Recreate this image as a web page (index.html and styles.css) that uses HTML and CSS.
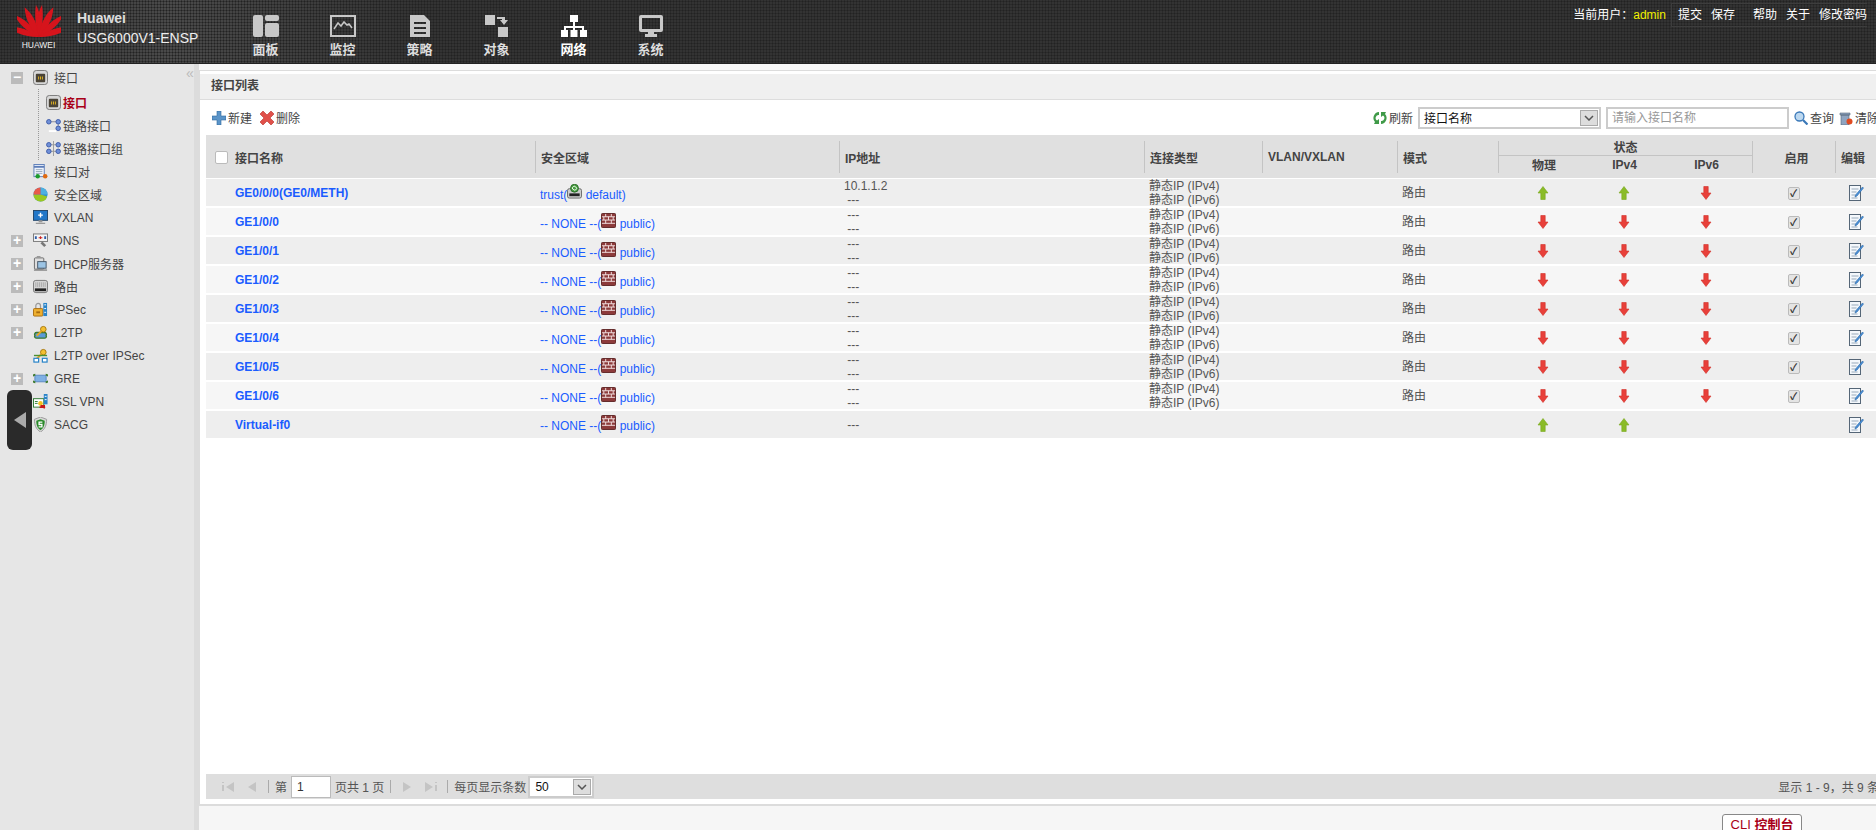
FILE: index.html
```html
<!DOCTYPE html>
<html lang="zh">

<head>
    <meta charset="UTF-8">
    <title>USG6000V1-ENSP</title>
    <link rel="stylesheet" href="styles.css">
</head>

<body>
    <svg class="defs" width="0" height="0">
        <defs>
            <symbol id="i-port" viewBox="0 0 16 16">
                <rect x="0.5" y="0.5" width="15" height="15" rx="3" fill="#d8d8d8" stroke="#777"/>
                <rect x="3" y="4" width="10" height="9" rx="1" fill="#4a4438"/>
                <path d="M5.5 7h1v3h-1zM7.5 7h1v3h-1zM9.5 7h1v3h-1z" fill="#e8b820"/>
            </symbol>
            <symbol id="i-link" viewBox="0 0 16 16">
                <path d="M3 4h10v8" fill="none" stroke="#889" stroke-width="1"/>
                <path d="M3 14h8" stroke="#fff" stroke-width="2"/>
                <circle cx="3" cy="4" r="2.4" fill="#6f8fd8" stroke="#3c5aa8"/>
                <circle cx="13" cy="4" r="2.4" fill="#6f8fd8" stroke="#3c5aa8"/>
                <circle cx="13" cy="11" r="2.4" fill="#6f8fd8" stroke="#3c5aa8"/>
            </symbol>
            <symbol id="i-group" viewBox="0 0 16 16">
                <path d="M8 0v16M3 4h10M3 11h10" stroke="#999" stroke-width="1"/>
                <circle cx="3" cy="4" r="2.4" fill="#6f8fd8" stroke="#3c5aa8"/>
                <circle cx="13" cy="4" r="2.4" fill="#6f8fd8" stroke="#3c5aa8"/>
                <circle cx="3" cy="11" r="2.4" fill="#6f8fd8" stroke="#3c5aa8"/>
                <circle cx="13" cy="11" r="2.4" fill="#6f8fd8" stroke="#3c5aa8"/>
            </symbol>
            <symbol id="i-pair" viewBox="0 0 16 16">
                <rect x="1" y="0.5" width="11" height="13" fill="#eef3fb" stroke="#5c7db8"/>
                <path d="M1 3h11" stroke="#5c7db8" stroke-width="2"/>
                <path d="M3 6h7M3 8h7M3 10h7" stroke="#9ab"/>
                <circle cx="5" cy="13" r="2.4" fill="#1c9a2c"/>
                <circle cx="13" cy="13" r="2.4" fill="#e06a10"/>
            </symbol>
            <symbol id="i-zone" viewBox="0 0 16 16">
                <circle cx="8" cy="8" r="7.5" fill="#2f8fd0"/>
                <path d="M8 8V.5A7.5 7.5 0 0 1 15.5 8z" fill="#4cb0e0"/>
                <path d="M8 8H.5A7.5 7.5 0 0 0 8 15.5 7.5 7.5 0 0 0 15 10z" fill="#9ac820"/>
                <path d="M8 8V.5A7.5 7.5 0 0 0 .5 8z" fill="#e85a4a"/>
            </symbol>
            <symbol id="i-vxlan" viewBox="0 0 16 16">
                <rect x="0.5" y="0.5" width="15" height="10.5" fill="#2277c8" stroke="#246"/>
                <path d="M8 3v5M5.5 5.500h5" stroke="#fff" stroke-width="1.500"/>
                <path d="M6 11h4v2H6zM3 13.500h10v1.500H3z" fill="#999"/>
            </symbol>
            <symbol id="i-dns" viewBox="0 0 16 16">
                <rect x="0.5" y="1" width="15" height="8" fill="#f4f4f4" stroke="#777"/>
                <path d="M6 5h4M8 3.500v3" stroke="#c22" stroke-width="1.200"/>
                <path d="M2 3.500h2v3H2zM12 3.500h2v3h-2z" fill="#2a5aa8"/>
                <path d="M9 10l4 4" stroke="#777" stroke-width="3"/>
            </symbol>
            <symbol id="i-dhcp" viewBox="0 0 16 16">
                <rect x="1.500" y="2" width="10" height="12" rx="1" fill="#ddd" stroke="#666"/>
                <rect x="5" y="6" width="9" height="7" fill="#9cc4e4" stroke="#456"/>
                <path d="M1 15h14" stroke="#888" stroke-width="1.500"/>
                <path d="M4 0h4v2H4z" fill="#999"/>
            </symbol>
            <symbol id="i-route" viewBox="0 0 16 16">
                <rect x="0.500" y="1.500" width="15" height="13" rx="2.500" fill="#d4d4d4" stroke="#777"/>
                <path d="M3 3.500v5M5 3.500v5M7 3.500v5M9 3.500v5M11 3.500v5M13 3.500v5" stroke="#aaa"/>
                <rect x="2" y="10" width="12" height="3" fill="#222"/>
            </symbol>
            <symbol id="i-ipsec" viewBox="0 0 16 16">
                <path d="M3 7V4a2.500 2.500 0 0 1 5 0v3" fill="none" stroke="#999" stroke-width="1.300"/>
                <rect x="0.500" y="7" width="10" height="8" rx="1" fill="#eeb030" stroke="#a86c10"/>
                <rect x="3.500" y="10" width="4" height="2" fill="#a86c10"/>
                <path d="M13 1v14" stroke="#2a84c8" stroke-width="4"/>
                <path d="M12 3h2M12 7h2M12 11h2" stroke="#fff"/>
            </symbol>
            <symbol id="i-l2tp" viewBox="0 0 16 16">
                <path d="M2 11a2 2 0 0 1 2-3h8a2 2 0 0 1 2 3 2 2 0 0 1-2 3H4a2 2 0 0 1-2-3z" fill="#5c9ad8" stroke="#3d7a30" stroke-width="1.500"/>
                <circle cx="11" cy="4.500" r="3" fill="#f4c030" stroke="#a87810"/>
                <path d="M9 6.500l-5 5" stroke="#e8a820" stroke-width="2"/>
            </symbol>
            <symbol id="i-l2tpsec" viewBox="0 0 16 16">
                <circle cx="11" cy="4.500" r="3" fill="#f4c030" stroke="#a87810"/>
                <path d="M9 6.500l-5 5" stroke="#e8a820" stroke-width="2"/>
                <path d="M1 8h14" stroke="#4a9030" stroke-width="1.500"/>
                <rect x="1" y="11" width="5" height="4" fill="#fff" stroke="#2a84c8" stroke-width="1.300"/>
                <rect x="10" y="11" width="5" height="4" fill="#fff" stroke="#2a84c8" stroke-width="1.300"/>
            </symbol>
            <symbol id="i-gre" viewBox="0 0 16 16">
                <rect x="2" y="4.500" width="12" height="7" rx="1" fill="#7fb0e4" stroke="#5a88c0"/>
                <path d="M2.500 4a4 4 0 0 0 0 8M13.500 4a4 4 0 0 1 0 8" fill="none" stroke="#3d7a30" stroke-width="2"/>
            </symbol>
            <symbol id="i-ssl" viewBox="0 0 16 16">
                <rect x="0.500" y="5" width="11" height="9" fill="#fff" stroke="#2c7a30"/>
                <path d="M2 8h3M2 10h3" stroke="#2c7a30"/>
                <circle cx="8" cy="10" r="2.500" fill="#f0c020"/>
                <path d="M8 12.500h4v3M7 14h6" stroke="#c81818" stroke-width="1.600" fill="none"/>
                <path d="M13.500 0v11" stroke="#2a84c8" stroke-width="4"/>
                <path d="M12.500 2.500h2M12.500 6h2" stroke="#fff"/>
            </symbol>
            <symbol id="i-sacg" viewBox="0 0 16 16">
                <path d="M8 0l6.500 2.500c0 6-1.500 10.500-6.500 13.500C3 13 1.500 8.500 1.500 2.500z" fill="#d8d8d8" stroke="#999"/>
                <path d="M8 2.500l4.500 1.500c0 4.500-1 8-4.500 10C4.500 12 3.500 8.500 3.500 4z" fill="#2a8a2a"/>
                <path d="M10 5.500H6.500v2.500h3v2.500H6" fill="none" stroke="#fff" stroke-width="1.400"/>
            </symbol>
            <symbol id="i-wall" viewBox="0 0 16 16">
                <rect x="0.500" y="0.500" width="15" height="15" rx="1" fill="#8c3a3a" stroke="#5c2222"/>
                <path d="M1 4h14M1 7.500h14M1 11h14M5 1v3M11 1v3M3 4v3.500M8 4v3.500M13 4v3.500M5 7.500v3.500M11 7.500v3.500" stroke="#f4e4e4"/>
            </symbol>
            <symbol id="i-vsys" viewBox="0 0 16 16">
                <rect x="0.500" y="5" width="15" height="10" rx="2" fill="#ccc" stroke="#666"/>
                <rect x="2.500" y="10" width="11" height="3" fill="#222"/>
                <circle cx="8" cy="4.500" r="4.200" fill="#48a040" stroke="#2a6a28"/>
                <path d="M6 5.500a2 2 0 0 1 3.500-2M10 3.500a2 2 0 0 1-3.500 2" fill="none" stroke="#fff"/>
            </symbol>
            <symbol id="i-up" viewBox="0 0 12 14">
                <path d="M6 0.500l5 6.500H8.200v6.500H3.800V7H1z" fill="#8abb28" stroke="#78a820" stroke-width=".6"/>
            </symbol>
            <symbol id="i-down" viewBox="0 0 12 14">
                <path d="M3.800 0.500h4.400V7H11l-5 6.500L1 7h2.800z" fill="#e8403a" stroke="#d03028" stroke-width=".6"/>
            </symbol>
            <symbol id="i-edit" viewBox="0 0 16 18">
                <rect x="1.500" y="1.500" width="11" height="15" fill="#f4f8fc" stroke="#567"/>
                <path d="M3.500 5h7M3.500 8h5M3.500 11h4M3.500 14h6" stroke="#9ab"/>
                <path d="M14.500 3l1 1-6.500 8-2 1 .5-2z" fill="#4a90d8" stroke="#2a68a8" stroke-width=".6"/>
            </symbol>
        </defs>
    </svg>

    <header class="topbar">
        <div class="brand">
            <div class="logo">
                <svg class="logo-mark" viewBox="0 0 44 34" width="44" height="34">
                    <g fill="#d6141c">
                        <path d="M22 33C19 25 17 12 22 0c5 12 3 25 0 33z" transform="rotate(-72 22 33)"/>
                        <path d="M22 33C19 25 17 12 22 0c5 12 3 25 0 33z" transform="rotate(-48 22 33)"/>
                        <path d="M22 33C18 25 16 12 21 0c6 12 4 25 1 33z" transform="rotate(-24 22 33)"/>
                        <path d="M22 33C19 25 17 12 19 1c5 8 6 22 3 32z"/>
                        <path d="M22 33C25 25 27 12 25 1c-5 8-6 22-3 32z"/>
                        <path d="M22 33C26 25 28 12 23 0c-6 12-4 25-1 33z" transform="rotate(24 22 33)"/>
                        <path d="M22 33C25 25 27 12 22 0c-5 12-3 25 0 33z" transform="rotate(48 22 33)"/>
                        <path d="M22 33C25 25 27 12 22 0c-5 12-3 25 0 33z" transform="rotate(72 22 33)"/>
                    </g>
                </svg>
                <span class="logo-text">HUAWEI</span>
            </div>
            <div class="product">
                <div class="product-name">Huawei</div>
                <div class="product-model">USG6000V1-ENSP</div>
            </div>
        </div>
        <nav class="mainnav">
            <a class="nav-item">
                <svg class="nav-icon" viewBox="0 0 26 22">
                    <rect x="0" y="0" width="10" height="22" rx="2"/>
                    <rect x="12" y="0" width="14" height="6" rx="2"/>
                    <rect x="12" y="8" width="14" height="14" rx="2"/>
                </svg>
                面板
            </a>
            <a class="nav-item">
                <svg class="nav-icon" viewBox="0 0 26 22">
                    <rect x="1" y="1" width="24" height="20" fill="none" stroke="#c8c8c8" stroke-width="2"/>
                    <path d="M4 14l4-6 3 3 3-4 3 3 2-1 3 4" fill="none" stroke="#c8c8c8" stroke-width="1.500"/>
                </svg>
                监控
            </a>
            <a class="nav-item">
                <svg class="nav-icon" viewBox="0 0 26 22">
                    <path d="M3 0h14l6 6v16H3zM7 7v2h12V7zM7 12v2h12v-2zM7 17v2h12v-2z" fill-rule="evenodd"/>
                </svg>
                策略
            </a>
            <a class="nav-item">
                <svg class="nav-icon" viewBox="0 0 26 22">
                    <rect x="1" y="0" width="10" height="10"/>
                    <rect x="14" y="12" width="10" height="10"/>
                    <path d="M13 2h8v3h3l-4 5-4-5h2V4h-5z"/>
                </svg>
                对象
            </a>
            <a class="nav-item is-active">
                <svg class="nav-icon" viewBox="0 0 26 22">
                    <rect x="9" y="0" width="8" height="7"/>
                    <rect x="0" y="15" width="7" height="7"/>
                    <rect x="9.500" y="15" width="7" height="7"/>
                    <rect x="19" y="15" width="7" height="7"/>
                    <path d="M12 7h2v4h9v4h-2v-2h-7v2h-2v-2H5v2H3v-4h9z"/>
                </svg>
                网络
            </a>
            <a class="nav-item">
                <svg class="nav-icon" viewBox="0 0 26 22">
                    <path d="M3 0h20a2 2 0 0 1 2 2v13a2 2 0 0 1-2 2H3a2 2 0 0 1-2-2V2a2 2 0 0 1 2-2zM4 3v11h18V3z" fill-rule="evenodd"/>
                    <path d="M10 17h6v2h3v3H7v-3h3z"/>
                </svg>
                系统
            </a>
        </nav>
        <div class="userbar">
            <span class="user-label">当前用户：<b class="user-name">admin</b></span>
            <div class="user-links">
                <a>提交</a>
                <a>保存</a>
                <a class="gap-left">帮助</a>
                <a>关于</a>
                <a>修改密码</a>
            </div>
        </div>
    </header>

    <div class="page">
        <aside class="sidebar">
            <span class="collapse-mark">«</span>
            <ul class="tree">
                <li class="tree-row"><span class="toggle">−</span><svg class="t-icon"><use href="#i-port"/></svg><span>接口</span></li>
                <li>
                    <ul class="subtree">
                        <li class="sub-row is-current"><svg class="t-icon"><use href="#i-port"/></svg><span>接口</span></li>
                        <li class="sub-row"><svg class="t-icon"><use href="#i-link"/></svg><span>链路接口</span></li>
                        <li class="sub-row"><svg class="t-icon"><use href="#i-group"/></svg><span>链路接口组</span></li>
                    </ul>
                </li>
                <li class="tree-row"><span class="toggle none"></span><svg class="t-icon"><use href="#i-pair"/></svg><span>接口对</span></li>
                <li class="tree-row"><span class="toggle none"></span><svg class="t-icon"><use href="#i-zone"/></svg><span>安全区域</span></li>
                <li class="tree-row"><span class="toggle none"></span><svg class="t-icon"><use href="#i-vxlan"/></svg><span>VXLAN</span></li>
                <li class="tree-row"><span class="toggle">+</span><svg class="t-icon"><use href="#i-dns"/></svg><span>DNS</span></li>
                <li class="tree-row"><span class="toggle">+</span><svg class="t-icon"><use href="#i-dhcp"/></svg><span>DHCP服务器</span></li>
                <li class="tree-row"><span class="toggle">+</span><svg class="t-icon"><use href="#i-route"/></svg><span>路由</span></li>
                <li class="tree-row"><span class="toggle">+</span><svg class="t-icon"><use href="#i-ipsec"/></svg><span>IPSec</span></li>
                <li class="tree-row"><span class="toggle">+</span><svg class="t-icon"><use href="#i-l2tp"/></svg><span>L2TP</span></li>
                <li class="tree-row"><span class="toggle none"></span><svg class="t-icon"><use href="#i-l2tpsec"/></svg><span>L2TP over IPSec</span></li>
                <li class="tree-row"><span class="toggle">+</span><svg class="t-icon"><use href="#i-gre"/></svg><span>GRE</span></li>
                <li class="tree-row"><span class="toggle none"></span><svg class="t-icon"><use href="#i-ssl"/></svg><span>SSL VPN</span></li>
                <li class="tree-row"><span class="toggle none"></span><svg class="t-icon"><use href="#i-sacg"/></svg><span>SACG</span></li>
            </ul>
            <div class="side-handle"><span class="handle-arrow"></span></div>
        </aside>

        <div class="workspace">
            <main class="panel">
                <div class="panel-title">接口列表</div>

                <div class="toolbar">
                    <a class="tool">
                        <svg class="tool-icon" viewBox="0 0 14 14"><path d="M5 0h4v5h5v4H9v5H5V9H0V5h5z" fill="#5b94c8" stroke="#2f6aa0" stroke-width=".6"/></svg>
                        新建
                    </a>
                    <a class="tool">
                        <svg class="tool-icon" viewBox="0 0 14 14"><path d="M3 0l4 4 4-4 3 3-4 4 4 4-3 3-4-4-4 4-3-3 4-4-4-4z" fill="#e0504a" stroke="#b83028" stroke-width=".6"/></svg>
                        删除
                    </a>
                    <div class="tool-right">
                        <a class="tool">
                            <svg class="tool-icon" viewBox="0 0 14 14"><path d="M6 1a6 6 0 0 0-4 10l-1 2h5V8L4 9.500A3 3 0 0 1 6 4zM8 13a6 6 0 0 0 4-10l1-2H8v5l2-1.500A3 3 0 0 1 8 10z" fill="#3f9a48"/></svg>
                            刷新
                        </a>
                        <div class="combo combo-search">
                            <span>接口名称</span>
                            <span class="combo-arrow"><svg viewBox="0 0 10 6" width="10" height="6"><path d="M1 1l4 4 4-4" fill="none" stroke="#555" stroke-width="1.500"/></svg></span>
                        </div>
                        <input class="search-input" type="text" placeholder="请输入接口名称">
                        <a class="tool">
                            <svg class="tool-icon" viewBox="0 0 14 14"><circle cx="5.500" cy="5.500" r="4.500" fill="#bcd8f0" stroke="#3a78b8" stroke-width="1.300"/><path d="M9 9l4.500 4.500" stroke="#3a78b8" stroke-width="2.200"/></svg>
                            查询
                        </a>
                        <a class="tool">
                            <svg class="tool-icon" viewBox="0 0 14 14"><path d="M1 2h10v2H1zM2 4h8v10H2z" fill="#8fa4c0" stroke="#567"  stroke-width=".6"/><circle cx="10.500" cy="10.500" r="3" fill="#e04a20"/></svg>
                            清除
                        </a>
                    </div>
                </div>

                <div class="grid">
                    <div class="grid-head">
                        <div class="hcell hcell-first"><span class="head-check"></span>接口名称</div>
                        <div class="hcell">安全区域</div>
                        <div class="hcell">IP地址</div>
                        <div class="hcell">连接类型</div>
                        <div class="hcell">VLAN/VXLAN</div>
                        <div class="hcell">模式</div>
                        <div class="hcell-state">
                            <div class="state-title">状态</div>
                            <div class="state-sub"><span>物理</span><span>IPv4</span><span>IPv6</span></div>
                        </div>
                        <div class="hcell hcell-center">启用</div>
                        <div class="hcell">编辑</div>
                    </div>

                    <div class="row">
                        <a class="c-name">GE0/0/0(GE0/METH)</a>
                        <a class="c-zone">trust(<svg class="zone-icon"><use href="#i-vsys"/></svg> default)</a>
                        <div class="c-text">10.1.1.2<br>&nbsp;---</div>
                        <div class="c-text">静态IP (IPv4)<br>静态IP (IPv6)</div>
                        <div class="c-text"></div>
                        <div class="c-text">路由</div>
                        <div class="c-mark"><svg class="arrow"><use href="#i-up"/></svg></div>
                        <div class="c-mark"><svg class="arrow"><use href="#i-up"/></svg></div>
                        <div class="c-mark"><svg class="arrow"><use href="#i-down"/></svg></div>
                        <div class="c-mark"><span class="check">✓</span></div>
                        <div class="c-edit"><svg class="edit"><use href="#i-edit"/></svg></div>
                    </div>
                    <div class="row">
                        <a class="c-name">GE1/0/0</a>
                        <a class="c-zone">-- NONE --(<svg class="zone-icon"><use href="#i-wall"/></svg> public)</a>
                        <div class="c-text">&nbsp;---<br>&nbsp;---</div>
                        <div class="c-text">静态IP (IPv4)<br>静态IP (IPv6)</div>
                        <div class="c-text"></div>
                        <div class="c-text">路由</div>
                        <div class="c-mark"><svg class="arrow"><use href="#i-down"/></svg></div>
                        <div class="c-mark"><svg class="arrow"><use href="#i-down"/></svg></div>
                        <div class="c-mark"><svg class="arrow"><use href="#i-down"/></svg></div>
                        <div class="c-mark"><span class="check">✓</span></div>
                        <div class="c-edit"><svg class="edit"><use href="#i-edit"/></svg></div>
                    </div>
                    <div class="row">
                        <a class="c-name">GE1/0/1</a>
                        <a class="c-zone">-- NONE --(<svg class="zone-icon"><use href="#i-wall"/></svg> public)</a>
                        <div class="c-text">&nbsp;---<br>&nbsp;---</div>
                        <div class="c-text">静态IP (IPv4)<br>静态IP (IPv6)</div>
                        <div class="c-text"></div>
                        <div class="c-text">路由</div>
                        <div class="c-mark"><svg class="arrow"><use href="#i-down"/></svg></div>
                        <div class="c-mark"><svg class="arrow"><use href="#i-down"/></svg></div>
                        <div class="c-mark"><svg class="arrow"><use href="#i-down"/></svg></div>
                        <div class="c-mark"><span class="check">✓</span></div>
                        <div class="c-edit"><svg class="edit"><use href="#i-edit"/></svg></div>
                    </div>
                    <div class="row">
                        <a class="c-name">GE1/0/2</a>
                        <a class="c-zone">-- NONE --(<svg class="zone-icon"><use href="#i-wall"/></svg> public)</a>
                        <div class="c-text">&nbsp;---<br>&nbsp;---</div>
                        <div class="c-text">静态IP (IPv4)<br>静态IP (IPv6)</div>
                        <div class="c-text"></div>
                        <div class="c-text">路由</div>
                        <div class="c-mark"><svg class="arrow"><use href="#i-down"/></svg></div>
                        <div class="c-mark"><svg class="arrow"><use href="#i-down"/></svg></div>
                        <div class="c-mark"><svg class="arrow"><use href="#i-down"/></svg></div>
                        <div class="c-mark"><span class="check">✓</span></div>
                        <div class="c-edit"><svg class="edit"><use href="#i-edit"/></svg></div>
                    </div>
                    <div class="row">
                        <a class="c-name">GE1/0/3</a>
                        <a class="c-zone">-- NONE --(<svg class="zone-icon"><use href="#i-wall"/></svg> public)</a>
                        <div class="c-text">&nbsp;---<br>&nbsp;---</div>
                        <div class="c-text">静态IP (IPv4)<br>静态IP (IPv6)</div>
                        <div class="c-text"></div>
                        <div class="c-text">路由</div>
                        <div class="c-mark"><svg class="arrow"><use href="#i-down"/></svg></div>
                        <div class="c-mark"><svg class="arrow"><use href="#i-down"/></svg></div>
                        <div class="c-mark"><svg class="arrow"><use href="#i-down"/></svg></div>
                        <div class="c-mark"><span class="check">✓</span></div>
                        <div class="c-edit"><svg class="edit"><use href="#i-edit"/></svg></div>
                    </div>
                    <div class="row">
                        <a class="c-name">GE1/0/4</a>
                        <a class="c-zone">-- NONE --(<svg class="zone-icon"><use href="#i-wall"/></svg> public)</a>
                        <div class="c-text">&nbsp;---<br>&nbsp;---</div>
                        <div class="c-text">静态IP (IPv4)<br>静态IP (IPv6)</div>
                        <div class="c-text"></div>
                        <div class="c-text">路由</div>
                        <div class="c-mark"><svg class="arrow"><use href="#i-down"/></svg></div>
                        <div class="c-mark"><svg class="arrow"><use href="#i-down"/></svg></div>
                        <div class="c-mark"><svg class="arrow"><use href="#i-down"/></svg></div>
                        <div class="c-mark"><span class="check">✓</span></div>
                        <div class="c-edit"><svg class="edit"><use href="#i-edit"/></svg></div>
                    </div>
                    <div class="row">
                        <a class="c-name">GE1/0/5</a>
                        <a class="c-zone">-- NONE --(<svg class="zone-icon"><use href="#i-wall"/></svg> public)</a>
                        <div class="c-text">&nbsp;---<br>&nbsp;---</div>
                        <div class="c-text">静态IP (IPv4)<br>静态IP (IPv6)</div>
                        <div class="c-text"></div>
                        <div class="c-text">路由</div>
                        <div class="c-mark"><svg class="arrow"><use href="#i-down"/></svg></div>
                        <div class="c-mark"><svg class="arrow"><use href="#i-down"/></svg></div>
                        <div class="c-mark"><svg class="arrow"><use href="#i-down"/></svg></div>
                        <div class="c-mark"><span class="check">✓</span></div>
                        <div class="c-edit"><svg class="edit"><use href="#i-edit"/></svg></div>
                    </div>
                    <div class="row">
                        <a class="c-name">GE1/0/6</a>
                        <a class="c-zone">-- NONE --(<svg class="zone-icon"><use href="#i-wall"/></svg> public)</a>
                        <div class="c-text">&nbsp;---<br>&nbsp;---</div>
                        <div class="c-text">静态IP (IPv4)<br>静态IP (IPv6)</div>
                        <div class="c-text"></div>
                        <div class="c-text">路由</div>
                        <div class="c-mark"><svg class="arrow"><use href="#i-down"/></svg></div>
                        <div class="c-mark"><svg class="arrow"><use href="#i-down"/></svg></div>
                        <div class="c-mark"><svg class="arrow"><use href="#i-down"/></svg></div>
                        <div class="c-mark"><span class="check">✓</span></div>
                        <div class="c-edit"><svg class="edit"><use href="#i-edit"/></svg></div>
                    </div>
                    <div class="row row-short">
                        <a class="c-name">Virtual-if0</a>
                        <a class="c-zone">-- NONE --(<svg class="zone-icon"><use href="#i-wall"/></svg> public)</a>
                        <div class="c-text">&nbsp;---</div>
                        <div class="c-text"></div>
                        <div class="c-text"></div>
                        <div class="c-text"></div>
                        <div class="c-mark"><svg class="arrow"><use href="#i-up"/></svg></div>
                        <div class="c-mark"><svg class="arrow"><use href="#i-up"/></svg></div>
                        <div class="c-mark"></div>
                        <div class="c-mark"></div>
                        <div class="c-edit"><svg class="edit"><use href="#i-edit"/></svg></div>
                    </div>
                </div>

                <div class="pager">
                    <svg class="page-btn" viewBox="0 0 14 14"><path d="M1 2h2v1H1zM1 5h2v6H1zM13 2v10L5 7z"/></svg>
                    <svg class="page-btn" viewBox="0 0 14 14"><path d="M11 2v10L3 7z"/></svg>
                    <span class="page-sep"></span>
                    <span>第</span>
                    <input class="page-input" type="text" value="1">
                    <span>页共 1 页</span>
                    <span class="page-sep"></span>
                    <svg class="page-btn" viewBox="0 0 14 14"><path d="M3 2v10l8-5z"/></svg>
                    <svg class="page-btn" viewBox="0 0 14 14"><path d="M1 2v10l8-5zM11 2h2v1h-2zM11 5h2v6h-2z"/></svg>
                    <span class="page-sep"></span>
                    <span>每页显示条数</span>
                    <div class="combo combo-page">
                        <span>50</span>
                        <span class="combo-arrow"><svg viewBox="0 0 10 6" width="10" height="6"><path d="M1 1l4 4 4-4" fill="none" stroke="#555" stroke-width="1.500"/></svg></span>
                    </div>
                    <span class="page-info">显示 1 - 9，共 9 条</span>
                </div>
            </main>

            <footer class="footer">
                <a class="cli-btn">CLI <b>控制台</b></a>
            </footer>
        </div>
    </div>
</body>

</html>
```

FILE: styles.css
```css
* {
    box-sizing: border-box;
}

html,
body {
    height: 100%;
}

body {
    margin: 0;
    overflow: hidden;
    display: flex;
    flex-direction: column;
    font-family: "Liberation Sans", "Noto Sans CJK SC", sans-serif;
    font-size: 12px;
    color: #444;
    background-color: #fff;
}

ul {
    list-style: none;
    margin: 0;
    padding: 0;
}

a {
    color: inherit;
    text-decoration: none;
}

.defs {
    position: absolute;
}

/* top bar */
.topbar {
    flex: none;
    height: 64px;
    display: flex;
    color: #fff;
    background-color: #333;
    background-image:
        radial-gradient(circle at 1.5px 1.5px, #222 0.8px, transparent 1.2px),
        linear-gradient(90deg, #333 0, #4a4a4a 170px, #333 420px);
    background-size: 3px 3px, 100% 100%;
    border-bottom: 1px solid #222;
}

.brand {
    width: 227px;
    flex: none;
    display: flex;
}

.logo {
    width: 77px;
    display: flex;
    flex-direction: column;
    align-items: center;
    padding: 4px 0 0 0;
}

.logo-mark {
    display: block;
}

.logo-text {
    font-size: 8.500px;
    margin-top: 2px;
    color: #eee;
}

.product {
    padding-top: 9px;
}

.product-name {
    font-size: 14px;
    font-weight: bold;
    color: #ddd;
    line-height: 18px;
}

.product-model {
    font-size: 14px;
    line-height: 20px;
    margin-top: 1px;
    color: #eee;
}

.mainnav {
    display: flex;
    padding-top: 15px;
}

.nav-item {
    width: 77px;
    display: flex;
    flex-direction: column;
    align-items: center;
    font-size: 13px;
    font-weight: bold;
    line-height: 18px;
    color: #ddd;
}

.nav-icon {
    width: 26px;
    height: 22px;
    margin-bottom: 4px;
    fill: #c8c8c8;
}

.nav-item.is-active {
    color: #fff;
}

.nav-item.is-active .nav-icon {
    fill: #fff;
}

.userbar {
    margin-left: auto;
    display: flex;
    align-items: flex-start;
    padding: 3px 9px 0 0;
}

.user-label {
    line-height: 24px;
    margin-right: 5px;
}

.user-name {
    font-weight: normal;
    color: #f0f000;
}

.user-links {
    display: flex;
    gap: 9px;
    height: 24px;
    line-height: 22px;
    padding: 0 0 0 6px;
    border: 1px solid #3d3d3d;
    border-right: none;
}

.gap-left {
    margin-left: 9px;
}

/* page body */
.page {
    flex: 1;
    min-height: 0;
    display: flex;
}

.sidebar {
    position: relative;
    flex: none;
    width: 199px;
    padding-top: 2px;
    background-color: #e6e6e6;
    border-right: 5px solid #dcdcdc;
}

.collapse-mark {
    position: absolute;
    left: 186px;
    top: 1px;
    font-size: 14px;
    color: #bbb;
}

.tree-row {
    height: 23px;
    display: flex;
    align-items: center;
    padding-left: 11px;
    color: #444;
}

.toggle {
    flex: none;
    width: 12px;
    height: 12px;
    margin-right: 10px;
    background-color: #bbb;
    color: #fff;
    font-size: 14px;
    font-weight: bold;
    line-height: 11px;
    text-align: center;
}

.toggle.none {
    background: none;
}

.t-icon {
    flex: none;
    width: 15px;
    height: 15px;
    margin-right: 6px;
}

.subtree {
    position: relative;
    margin-left: 38px;
    padding-top: 2px;
    border-left: 1px dotted #999;
}

.sub-row {
    height: 23px;
    display: flex;
    align-items: center;
    padding-left: 7px;
    border-left: none;
    background-image: linear-gradient(90deg, #999 50%, transparent 50%);
    background-size: 2px 1px;
    background-repeat: repeat-x;
    background-position: 0 50%;
    background-origin: content-box;
}

.sub-row {
    background: none;
}

.sub-row .t-icon {
    margin-right: 2px;
}

.sub-row.is-current {
    color: #a80018;
    font-weight: bold;
}

.side-handle {
    position: absolute;
    left: 7px;
    top: 326px;
    width: 25px;
    height: 60px;
    display: flex;
    align-items: center;
    justify-content: center;
    background-color: #2a2a2a;
    border-radius: 6px;
}

.handle-arrow {
    width: 0;
    height: 0;
    border-top: 8px solid transparent;
    border-bottom: 8px solid transparent;
    border-right: 12px solid #aaa;
}

/* right side */
.workspace {
    flex: none;
    width: 1690px;
    display: flex;
    flex-direction: column;
    background-color: #f7f7f7;
}

.panel {
    flex: 1;
    min-height: 0;
    margin: 6px 0 0 0;
    padding: 3px 0 5px 6px;
    display: flex;
    flex-direction: column;
    background-color: #fff;
    border-top: 1px solid #dcdcdc;
    border-left: 1px solid #dcdcdc;
    border-bottom: 2px solid #dcdcdc;
}

.panel-title {
    flex: none;
    height: 26px;
    margin-left: -6px;
    padding-left: 11px;
    line-height: 25px;
    font-weight: bold;
    color: #444;
    background-color: #f0f0f0;
    border-bottom: 1px solid #ddd;
}

.toolbar {
    flex: none;
    height: 35px;
    display: flex;
    align-items: center;
    gap: 8px;
    padding-left: 6px;
}

.tool {
    display: flex;
    align-items: center;
    gap: 2px;
    white-space: nowrap;
}

.tool-icon {
    width: 14px;
    height: 14px;
}

.tool-right {
    margin-left: auto;
    display: flex;
    align-items: center;
    gap: 5px;
    padding-right: 10px;
}

.combo {
    display: flex;
    align-items: center;
    justify-content: space-between;
    background-color: #fff;
    border: 2px solid #ccc;
    color: #111;
}

.combo-search {
    width: 183px;
    height: 22px;
    padding: 0 1px 0 4px;
}

.combo-arrow {
    width: 18px;
    height: 16px;
    display: flex;
    align-items: center;
    justify-content: center;
    background-color: #ddd;
    border: 1px solid #aaa;
}

.search-input {
    width: 183px;
    height: 22px;
    padding: 0 4px;
    font: inherit;
    border: 2px solid #ccc;
}

.search-input::placeholder {
    color: #999;
}

/* interface grid */
.grid {
    flex: 1;
    min-height: 0;
}

.grid-head,
.row {
    display: grid;
    grid-template-columns: 329px 304px 305px 118px 135px 101px 90px 71px 93px 83px 1fr;
}

.grid-head {
    height: 43px;
    padding: 6px 0;
    background-color: #e0e0e0;
    font-weight: bold;
    color: #444;
}

.hcell {
    padding-left: 5px;
    display: flex;
    align-items: center;
    border-left: 1px solid #c4c4c4;
}

.hcell-first {
    border-left: none;
    padding-left: 9px;
}

.hcell-center {
    justify-content: center;
}

.head-check {
    width: 13px;
    height: 13px;
    margin-right: 7px;
    background-color: #fff;
    border: 1px solid #bbb;
    border-radius: 2px;
}

.hcell-state {
    grid-column: span 3;
    display: flex;
    flex-direction: column;
    border-left: 1px solid #c4c4c4;
}

.state-title {
    height: 15px;
    line-height: 14px;
    text-align: center;
    border-bottom: 1px solid #c4c4c4;
}

.state-sub {
    flex: 1;
    display: grid;
    grid-template-columns: 90px 71px 93px;
    align-items: center;
    text-align: center;
    font-weight: bold;
}

.row {
    height: 29px;
    align-items: center;
    color: #555;
    line-height: 14px;
    background-color: #eee;
    border-top: 1px solid #fff;
    border-bottom: 1px solid #fff;
}

.row:nth-child(odd) {
    background-color: #f6f6f6;
}

.row-short {
    height: 28px;
    border-bottom: none;
}

.c-name {
    padding-left: 29px;
    font-weight: bold;
    color: #1a5cff;
}

.c-zone {
    display: flex;
    align-items: flex-start;
    padding: 3px 0 0 5px;
    color: #1a5cff;
    white-space: pre;
}

.zone-icon {
    width: 15px;
    height: 15px;
    margin-top: -4px;
}

.c-text {
    padding-left: 5px;
}

.c-mark {
    display: flex;
    justify-content: center;
}

.arrow {
    width: 12px;
    height: 14px;
}

.check {
    width: 12px;
    height: 13px;
    background-color: #e4e4e4;
    border: 1px solid #bbb;
    border-radius: 2px;
    font-size: 10px;
    line-height: 11px;
    font-weight: bold;
    text-align: center;
    color: #333;
}

.c-edit {
    padding-left: 13px;
}

.edit {
    display: block;
    width: 16px;
    height: 18px;
}

/* pager */
.pager {
    flex: none;
    height: 25px;
    display: flex;
    align-items: center;
    gap: 4px;
    padding-left: 12px;
    background-color: #dedede;
    color: #555;
    white-space: nowrap;
}

.page-btn {
    width: 14px;
    height: 14px;
    margin: 0 3px;
    fill: #c4c4c4;
}

.page-sep {
    width: 1px;
    height: 13px;
    margin: 0 2px;
    background-color: #aaa;
}

.page-input {
    width: 40px;
    height: 22px;
    padding: 0 5px;
    font: inherit;
    color: #333;
    border: 1px solid #bbb;
}

.combo-page {
    width: 66px;
    height: 22px;
    padding: 0 1px 0 5px;
    margin-left: -2px;
}

.page-info {
    margin-left: auto;
    padding-right: 10px;
}

/* footer */
.footer {
    flex: none;
    height: 24px;
    padding: 8px 0 0 1523px;
    background-color: #f6f6f6;
}

.cli-btn {
    display: block;
    width: 80px;
    height: 24px;
    line-height: 19px;
    text-align: center;
    font-size: 13px;
    color: #a80018;
    background-color: #fff;
    border: 1px solid #888;
    border-radius: 3px 3px 0 0;
}
```
